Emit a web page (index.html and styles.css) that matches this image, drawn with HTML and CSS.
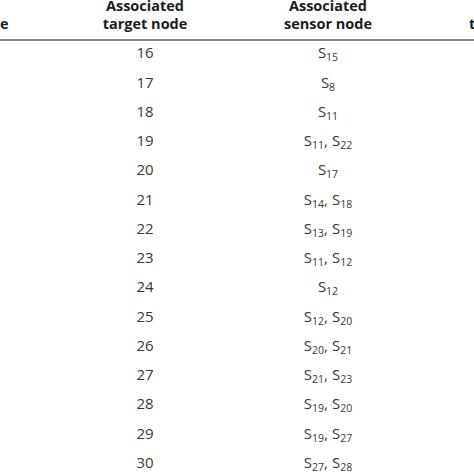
FILE: index.html
```html
<!DOCTYPE html>
<html>
<head>
<meta charset="utf-8">
<link rel="stylesheet" href="styles.css">
</head>
<body>
<div class="table">
  <div class="head">
    <div class="hc c1">e</div>
    <div class="hc c2">Associated<br>target node</div>
    <div class="hc c3">Associated<br>sensor node</div>
    <div class="hc c4">t</div>
  </div>
  <div class="row"><div></div><div class="c2">16</div><div class="c3">S<sub>15</sub></div><div></div></div>
  <div class="row"><div></div><div class="c2">17</div><div class="c3">S<sub>8</sub></div><div></div></div>
  <div class="row"><div></div><div class="c2">18</div><div class="c3">S<sub>11</sub></div><div></div></div>
  <div class="row"><div></div><div class="c2">19</div><div class="c3">S<sub>11</sub>, S<sub>22</sub></div><div></div></div>
  <div class="row"><div></div><div class="c2">20</div><div class="c3">S<sub>17</sub></div><div></div></div>
  <div class="row"><div></div><div class="c2">21</div><div class="c3">S<sub>14</sub>, S<sub>18</sub></div><div></div></div>
  <div class="row"><div></div><div class="c2">22</div><div class="c3">S<sub>13</sub>, S<sub>19</sub></div><div></div></div>
  <div class="row"><div></div><div class="c2">23</div><div class="c3">S<sub>11</sub>, S<sub>12</sub></div><div></div></div>
  <div class="row"><div></div><div class="c2">24</div><div class="c3">S<sub>12</sub></div><div></div></div>
  <div class="row"><div></div><div class="c2">25</div><div class="c3">S<sub>12</sub>, S<sub>20</sub></div><div></div></div>
  <div class="row"><div></div><div class="c2">26</div><div class="c3">S<sub>20</sub>, S<sub>21</sub></div><div></div></div>
  <div class="row"><div></div><div class="c2">27</div><div class="c3">S<sub>21</sub>, S<sub>23</sub></div><div></div></div>
  <div class="row"><div></div><div class="c2">28</div><div class="c3">S<sub>19</sub>, S<sub>20</sub></div><div></div></div>
  <div class="row"><div></div><div class="c2">29</div><div class="c3">S<sub>19</sub>, S<sub>27</sub></div><div></div></div>
  <div class="row"><div></div><div class="c2">30</div><div class="c3">S<sub>27</sub>, S<sub>28</sub></div><div></div></div>
</div>
</body>
</html>
```
FILE: styles.css
```css
html, body {
  margin: 0;
  padding: 0;
  background: #fff;
  overflow: hidden;
}
body {
  font-family: "Open Sans", "Noto Sans", sans-serif;
  color: #383838;
}
.table {
  width: 474px;
  margin-top: -4px;
}
.head, .row {
  display: grid;
  grid-template-columns: 70px 150px 216px 38px;
}
.head {
  border-bottom: 2px solid #858585;
  height: 45px;
  box-sizing: border-box;
  align-items: end;
  padding-bottom: 7px;
}
.hc {
  font-weight: 700;
  font-size: 14.5px;
  line-height: 17.3px;
  color: #1c1c1c;
  text-align: center;
}
.hc.c1 {
  text-align: left;
}
.hc.c4 {
  text-align: left;
  padding-left: 33px;
}
.row {
  height: 29.26px;
  align-items: start;
  padding-top: 2.3px;
  box-sizing: border-box;
  font-size: 15px;
  line-height: 18px;
}
.c2, .c3 {
  text-align: center;
}
sub {
  font-size: 10.5px;
  vertical-align: -3px;
  line-height: 0;
}
```
